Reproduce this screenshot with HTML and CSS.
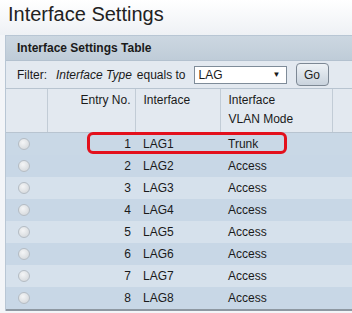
FILE: index.html
```html
<!DOCTYPE html>
<html>
<head>
    <title>Interface Settings</title>
    <link rel="stylesheet" href="styles.css">
</head>
<body>
    <h1 class="page-title">Interface Settings</h1>
    <div class="panel">
        <div class="panel-head">Interface Settings Table</div>
        <div class="filter-row">
            <span class="filter-label">Filter:</span>
            <em>Interface Type</em>
            <span>equals to</span>
            <div class="select">LAG<span class="arrow">&#9660;</span></div>
            <button class="go-btn">Go</button>
        </div>
        <table class="grid">
            <thead>
                <tr>
                    <th class="col-radio"></th>
                    <th class="col-entry">Entry No.</th>
                    <th class="col-if">Interface</th>
                    <th class="col-mode">Interface<br>VLAN Mode</th>
                    <th></th>
                </tr>
            </thead>
            <tbody>
                <tr><td class="col-radio"><span class="radio"></span></td><td class="col-entry">1</td><td>LAG1</td><td>Trunk</td><td></td></tr>
                <tr><td class="col-radio"><span class="radio"></span></td><td class="col-entry">2</td><td>LAG2</td><td>Access</td><td></td></tr>
                <tr><td class="col-radio"><span class="radio"></span></td><td class="col-entry">3</td><td>LAG3</td><td>Access</td><td></td></tr>
                <tr><td class="col-radio"><span class="radio"></span></td><td class="col-entry">4</td><td>LAG4</td><td>Access</td><td></td></tr>
                <tr><td class="col-radio"><span class="radio"></span></td><td class="col-entry">5</td><td>LAG5</td><td>Access</td><td></td></tr>
                <tr><td class="col-radio"><span class="radio"></span></td><td class="col-entry">6</td><td>LAG6</td><td>Access</td><td></td></tr>
                <tr><td class="col-radio"><span class="radio"></span></td><td class="col-entry">7</td><td>LAG7</td><td>Access</td><td></td></tr>
                <tr><td class="col-radio"><span class="radio"></span></td><td class="col-entry">8</td><td>LAG8</td><td>Access</td><td></td></tr>
            </tbody>
        </table>
        <div class="highlight"></div>
    </div>
</body>
</html>
```

FILE: styles.css
```css
body {
    margin: 0;
    font-family: "Liberation Sans", Arial, sans-serif;
    font-size: 12px;
    color: #1a1a1a;
    background: #f3f5f8;
    overflow: hidden;
}
.page-title {
    margin: 0;
    padding: 3px 0 0 8px;
    height: 35px;
    box-sizing: border-box;
    font-size: 20px;
    font-weight: normal;
    color: #222;
    background: linear-gradient(#ffffff, #eef1f5);
}
.panel {
    position: relative;
    margin-left: 5px;
    width: 360px;
    border-left: 1px solid #b8c6d4;
    border-top: 1px solid #b8c6d4;
    background: #dde5ee;
}
.panel-head {
    height: 24px;
    line-height: 24px;
    padding-left: 11px;
    font-weight: bold;
    font-size: 12px;
    background: linear-gradient(#ccd7e1, #bfccd8);
    border-bottom: 1px solid #b3c1cf;
}
.filter-row {
    display: flex;
    align-items: center;
    gap: 5px;
    height: 27px;
    padding-left: 11px;
    background: #e3e9f0;
    border-bottom: 1px solid #b8c4d0;
}
.filter-row em {
    margin-left: 4px;
    font-style: italic;
}
.select {
    display: flex;
    justify-content: space-between;
    align-items: center;
    margin-left: 3px;
    height: 18px;
    padding: 0 5px 0 4px;
    box-sizing: border-box;
    width: 93px;
    font-size: 12px;
    background: #fff;
    border: 1px solid #7f8c99;
}
.arrow {
    font-size: 8px;
}
.go-btn {
    margin-left: 4px;
    width: 33px;
    height: 23px;
    padding: 0;
    font-family: inherit;
    font-size: 12px;
    color: #222;
    border: 1px solid #7d8894;
    border-radius: 4px;
    background: linear-gradient(#eef2f6, #c9d3dd);
}
.grid {
    border-collapse: collapse;
    width: 360px;
    border-bottom: 2px solid #8e98a2;
}
.grid th {
    height: 43px;
    padding: 2px 8px 0;
    box-sizing: border-box;
    vertical-align: top;
    text-align: left;
    font-weight: normal;
    line-height: 19px;
    background: #e3e9f0;
    border-right: 1px solid #c2ccd6;
    border-bottom: 1px solid #b8c4d0;
}
.grid td {
    height: 22px;
    padding: 0 8px;
    box-sizing: border-box;
    line-height: 22px;
}
.grid .col-entry {
    padding-right: 4px;
    text-align: right;
}
.grid tbody tr:nth-child(odd) {
    background: #d6e1ec;
}
.grid tbody tr:nth-child(even) {
    background: #c8d7e6;
}
.grid tbody tr:first-child td {
    background: #c9d8e6;
}
.col-radio {
    width: 41px;
}
.col-entry {
    width: 88px;
}
.col-if {
    width: 85px;
}
.col-mode {
    width: 112px;
}
.radio {
    display: block;
    margin-left: 4px;
    width: 10px;
    height: 10px;
    border-radius: 50%;
    border: 1px solid #b4bcc4;
    background: radial-gradient(circle at 40% 35%, #f4f5f6, #cfd3d7);
}
.highlight {
    position: absolute;
    left: 81px;
    top: 96px;
    width: 200px;
    height: 22px;
    border: 3px solid #e3101c;
    border-radius: 6px;
    box-sizing: border-box;
}
```
